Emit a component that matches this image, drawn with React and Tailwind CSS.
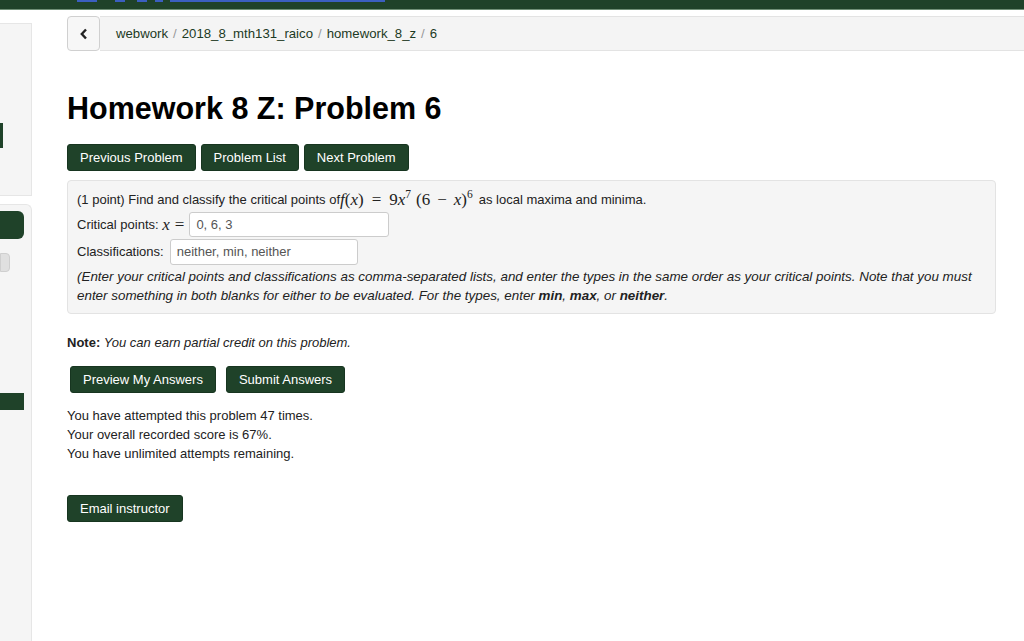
const green = "bg-[#1f4229]";

function GreenButton({ children, className = "" }) {
  return (
    <button
      type="button"
      className={`${green} text-white text-[13px] h-[27px] px-[12px] rounded-[3px] border border-[#173520] leading-none ${className}`}
    >
      {children}
    </button>
  );
}

function Sidebar() {
  return (
    <div className="w-[32px] shrink-0 flex flex-col">
      <div className="mt-[13px] h-[173px] bg-[#f5f5f5] border border-l-0 border-[#e6e6e6] relative">
        <div className="absolute left-0 top-[99px] w-[3px] h-[25px] bg-[#1f4229]" />
      </div>
      <div className="mt-[8px] flex-1 bg-[#f5f5f5] border border-l-0 border-b-0 border-[#e6e6e6] rounded-tr-[6px] pt-[6px] flex flex-col">
        <div className="w-[24px] h-[28px] bg-[#1f4229] rounded-r-[6px]" />
        <div className="mt-[14px] w-[10px] h-[19px] bg-[#e0e0e0] border border-[#cfcfcf] rounded-r-[4px]" />
        <div className="mt-[121px] w-[24px] h-[17px] bg-[#1f4229]" />
      </div>
    </div>
  );
}

function Breadcrumb() {
  return (
    <div className="flex h-[35px]">
      <button
        type="button"
        className="w-[33px] h-full bg-[#f7f7f7] border border-[#d0d0d0] rounded-[4px] flex items-center justify-center text-[#222]"
      >
        <svg width="10" height="12" viewBox="0 0 10 12">
          <path d="M7 1.5 L2.8 6 L7 10.5" fill="none" stroke="#222" strokeWidth="2.4" />
        </svg>
      </button>
      <div className="flex-1 bg-[#f4f4f4] border-y border-[#e3e3e3] flex items-center pl-[16px] text-[13.2px] text-[#1c3a24]">
        <span>webwork</span>
        <span className="text-[#999] px-[5px]">/</span>
        <span>2018_8_mth131_raico</span>
        <span className="text-[#999] px-[5px]">/</span>
        <span>homework_8_z</span>
        <span className="text-[#999] px-[5px]">/</span>
        <span>6</span>
      </div>
    </div>
  );
}

function Input({ value, width, height = "h-[26px]" }) {
  return (
    <div
      className={`${width} ${height} bg-white border border-[#cccccc] rounded-[3px] flex items-center px-[6px] text-[13px] text-[#555]`}
    >
      {value}
    </div>
  );
}

function ProblemBox() {
  const serif = "font-['Liberation_Serif',serif] text-[17px]";
  return (
    <div className="mr-[28px] bg-[#f5f5f5] border border-[#e3e3e3] rounded-[4px] px-[9px] pt-[9px] pb-[8px] text-[13px] text-[#222]">
      <div className="h-[20px] flex items-center">
        <span>(1 point) Find and classify the critical points of</span>
        <span className={`${serif} flex items-center`}>
          <i>f</i>(<i>x</i>)<span className="px-[8px]">=</span>9<i>x</i>
          <sup className="text-[11.5px]">7</sup>
          <span className="pl-[5px]">(6</span>
          <span className="px-[7px]">−</span>
          <i>x</i>)
          <sup className="text-[11.5px]">6</sup>
        </span>
        <span className="pl-[6px]">as local maxima and minima.</span>
      </div>
      <div className="flex items-center gap-[5px] mt-[2px]">
        <span className="flex items-center">
          Critical points:&nbsp;<i className={serif}>x</i>
          <span className={`${serif} pl-[5px]`}>=</span>
        </span>
        <Input value="0, 6, 3" width="w-[200px]" height="h-[25px]" />
      </div>
      <div className="flex items-center gap-[6px] mt-[1px]">
        <span>Classifications:</span>
        <Input value="neither, min, neither" width="w-[188px]" />
      </div>
      <p className="italic text-[13.4px] leading-[19px] mt-[2px]">
        (Enter your critical points and classifications as comma-separated lists, and enter the types in the same order as your critical points. Note that you must enter something in both blanks for either to be evaluated. For the types, enter{" "}
        <b>min</b>, <b>max</b>, or <b>neither</b>.
      </p>
    </div>
  );
}

export default function App() {
  return (
    <div className="min-h-screen flex flex-col bg-white font-['Liberation_Sans',Arial,sans-serif]">
      <div className="h-[10px] bg-[#1f4229] border-b border-[#6f8f76] relative overflow-hidden">
        <div className="absolute left-[77px] top-0 w-[20px] h-[2px] bg-[#3b5fc0]" />
        <div className="absolute left-[115px] top-0 w-[10px] h-[2px] bg-[#3b5fc0]" />
        <div className="absolute left-[137px] top-0 w-[10px] h-[2px] bg-[#3b5fc0]" />
        <div className="absolute left-[155px] top-0 w-[8px] h-[2px] bg-[#3b5fc0]" />
        <div className="absolute left-[170px] top-0 w-[215px] h-[2px] bg-[#3b5fc0]" />
      </div>
      <div className="flex flex-1">
        <Sidebar />
        <main className="flex-1 pl-[35px] pt-[6px]">
          <Breadcrumb />
          <h1 className="mt-[40px] text-[30.5px] font-bold text-black leading-[34px]">
            Homework 8 Z: Problem 6
          </h1>
          <div className="mt-[19px] flex gap-[5px]">
            <GreenButton>Previous Problem</GreenButton>
            <GreenButton>Problem List</GreenButton>
            <GreenButton>Next Problem</GreenButton>
          </div>
          <div className="mt-[9px]">
            <ProblemBox />
          </div>
          <p className="mt-[19px] text-[13px] text-[#222]">
            <b>Note:</b> <i>You can earn partial credit on this problem.</i>
          </p>
          <div className="mt-[14px] ml-[3px] flex gap-[10px]">
            <GreenButton>Preview My Answers</GreenButton>
            <GreenButton>Submit Answers</GreenButton>
          </div>
          <div className="mt-[13px] text-[13px] text-[#222] leading-[19px]">
            <p>You have attempted this problem 47 times.</p>
            <p>Your overall recorded score is 67%.</p>
            <p>You have unlimited attempts remaining.</p>
          </div>
          <div className="mt-[32px]">
            <GreenButton>Email instructor</GreenButton>
          </div>
        </main>
      </div>
    </div>
  );
}
